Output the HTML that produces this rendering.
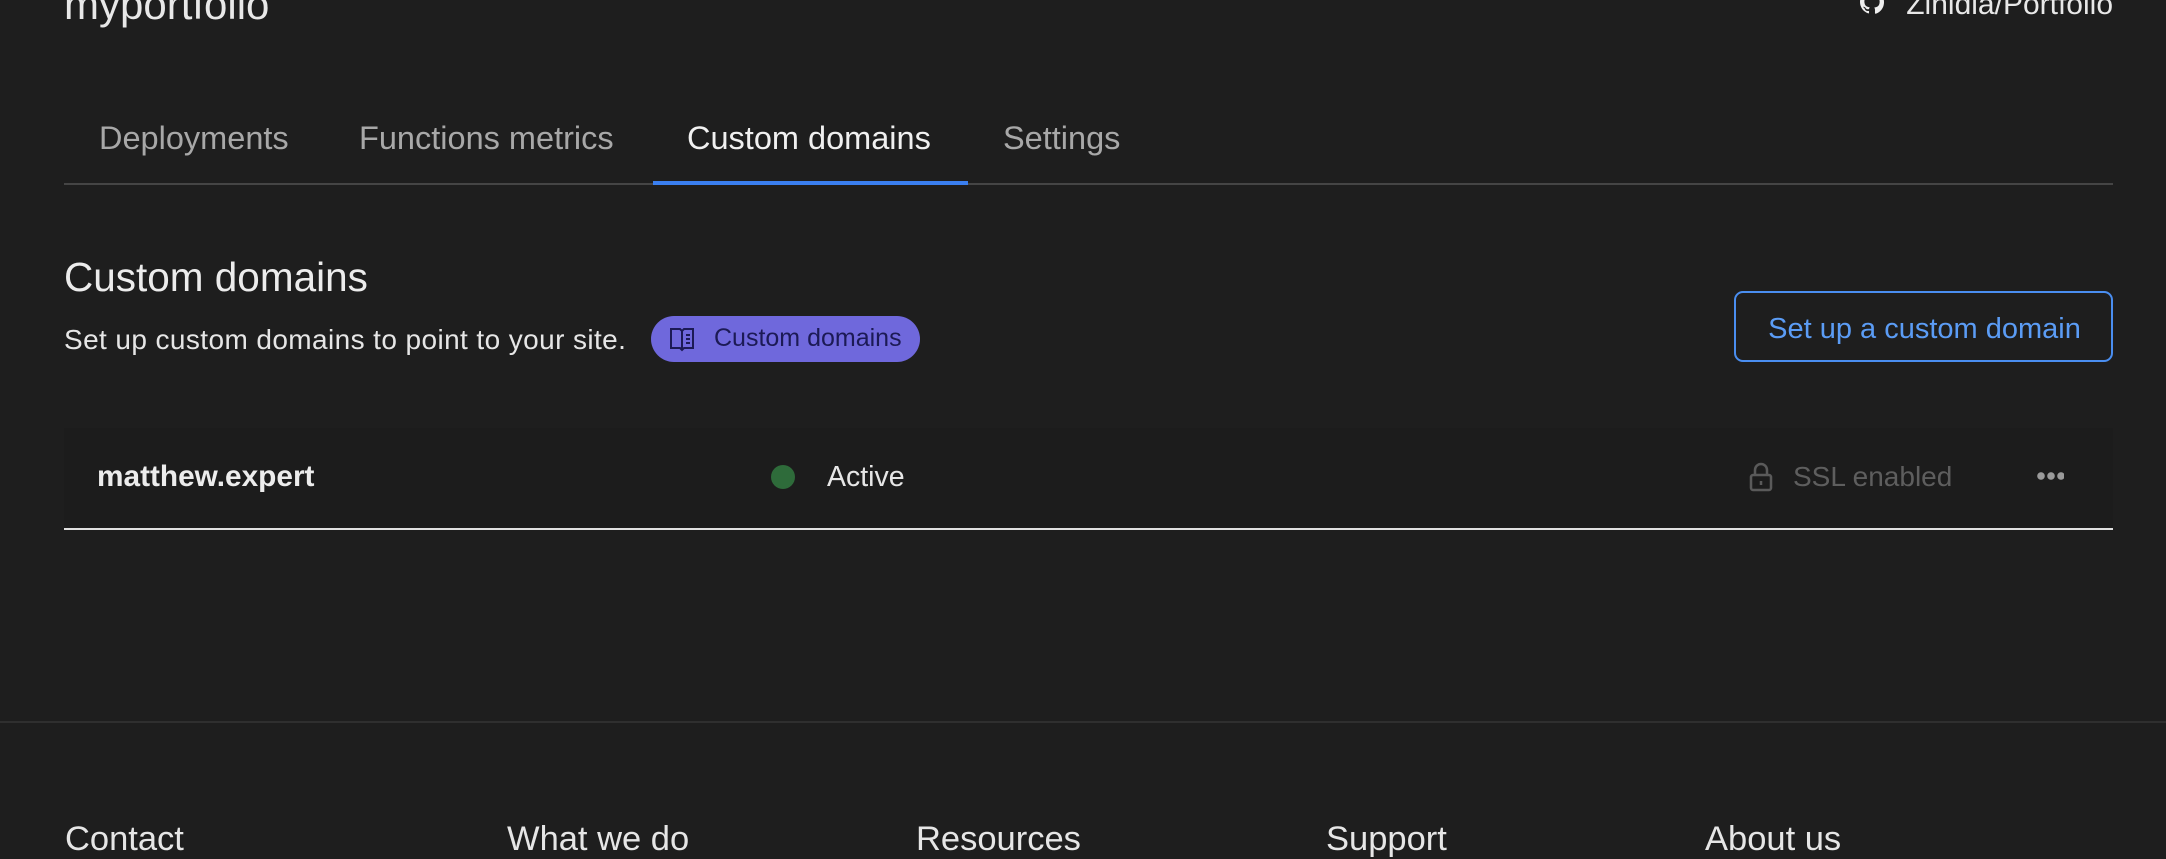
<!DOCTYPE html>
<html><head><meta charset="utf-8"><style>
*{margin:0;padding:0;box-sizing:border-box}
body{width:2166px;height:850px;background:#1e1e1e;font-family:"Liberation Sans",sans-serif;position:relative;overflow:hidden;color:#e8e8e8}
.a{position:absolute;white-space:nowrap}
.tab{top:120px;font-size:32.5px;color:#a8a8a8}
.ft{top:820px;font-size:34.5px;color:#e6e6e6}
</style></head><body>
<div class="a" style="left:64px;top:-19px;font-size:42px;color:#e8e8e8">myportfolio</div>
<svg class="a" style="left:1857px;top:-10px" width="30" height="24" viewBox="0 0 16 16"><path fill="#eee" d="M8 0C3.580 0 0 3.58 0 8c0 3.54 2.29 6.53 5.47 7.590.4.07.55-.17.55-.38v-1.33c-2.230.48-2.7-1.07-2.7-1.07-.36-.92-.89-1.170-.89-1.17-.73-.5.06-.49.06-.49.8.06 1.23.83 1.23.83.71 1.22 1.87.87 2.33.66.07-.52.28-.87.5-1.07-1.78-.2-3.64-.89-3.640-3.95 0-.87.31-1.59.82-2.15-.08-.2-.36-1.02.08-2.12 0 0 .67-.21 2.2.82A7.6 7.6 0 0 1 8 4.07c.68 0 1.36.09 2 .27 1.53-1.04 2.2-.82 2.2-.82.44 1.1.16 1.92.08 2.12.51.56.82 1.27.82 2.15 0 3.07-1.87 3.75-3.65 3.95.29.25.54.73.54 1.48v2.2c0 .21.15.46.55.38A8.01 8.01 0 0 0 16 8c0-4.42-3.58-8-8-8z"/></svg>
<div class="a" style="right:53px;top:-12px;font-size:30px;color:#e8e8e8">Zinidia/Portfolio</div>

<div class="a tab" style="left:99px">Deployments</div>
<div class="a tab" style="left:359px">Functions metrics</div>
<div class="a tab" style="left:687px;color:#f0f0f0">Custom domains</div>
<div class="a tab" style="left:1003px">Settings</div>
<div class="a" style="left:64px;top:183px;width:2049px;height:2px;background:#454545"></div>
<div class="a" style="left:653px;top:181px;width:315px;height:4px;background:#3a7ff0"></div>

<div class="a" style="left:64px;top:254px;font-size:40.5px;color:#ececec">Custom domains</div>
<div class="a" style="left:64px;top:324px;font-size:28px;letter-spacing:0.4px;color:#e6e6e6">Set up custom domains to point to your site.</div>
<div class="a" style="left:651px;top:316px;width:269px;height:46px;border-radius:23px;background:#6f68dc"></div>
<svg class="a" style="left:668px;top:326px" width="28" height="26" viewBox="0 0 28 26"><path d="M3 3h9l2 2 2-2h9v19h-9l-2 2-2-2H3z M14 5v19" fill="none" stroke="#1c1a55" stroke-width="2"/><path d="M18 9h4M18 13h4M18 17h4" stroke="#1c1a55" stroke-width="2"/></svg>
<div class="a" style="left:714px;top:324px;font-size:25px;color:#1c1a55">Custom domains</div>

<div class="a" style="left:1734px;top:291px;width:379px;height:71px;border:2px solid #4a8ef0;border-radius:9px"></div>
<div class="a" style="left:1735px;top:313px;width:379px;text-align:center;font-size:29px;color:#5b9cf5">Set up a custom domain</div>

<div class="a" style="left:64px;top:428px;width:2049px;height:101px;background:#1c1c1c"></div>
<div class="a" style="left:64px;top:528px;width:2049px;height:2px;background:#e0e0e0"></div>
<div class="a" style="left:97px;top:460px;font-size:29.8px;font-weight:bold;color:#ececec">matthew.expert</div>
<div class="a" style="left:771px;top:465px;width:24px;height:24px;border-radius:50%;background:#2e6b3a"></div>
<div class="a" style="left:827px;top:461px;font-size:28.5px;color:#e6e6e6">Active</div>
<svg class="a" style="left:1749px;top:462px" width="24" height="30" viewBox="0 0 24 30"><rect x="2" y="13" width="20" height="15" rx="2" fill="none" stroke="#5a5a5a" stroke-width="2.5"/><path d="M6 13V8a6 6 0 0 1 12 0v5" fill="none" stroke="#5a5a5a" stroke-width="2.5"/><path d="M12 19v4" stroke="#5a5a5a" stroke-width="2.5"/></svg>
<div class="a" style="left:1793px;top:461px;font-size:28px;color:#5e5e5e">SSL enabled</div>
<div class="a" style="left:2036px;top:472px;width:28px;height:8px;background:radial-gradient(circle,#9a9a9a 3.5px,transparent 4px) 0 0/10px 8px repeat-x"></div>

<div class="a" style="left:0;top:721px;width:2166px;height:2px;background:#2f2f2f"></div>
<div class="a ft" style="left:65px">Contact</div>
<div class="a ft" style="left:507px">What we do</div>
<div class="a ft" style="left:916px">Resources</div>
<div class="a ft" style="left:1326px">Support</div>
<div class="a ft" style="left:1705px">About us</div>
</body></html>
